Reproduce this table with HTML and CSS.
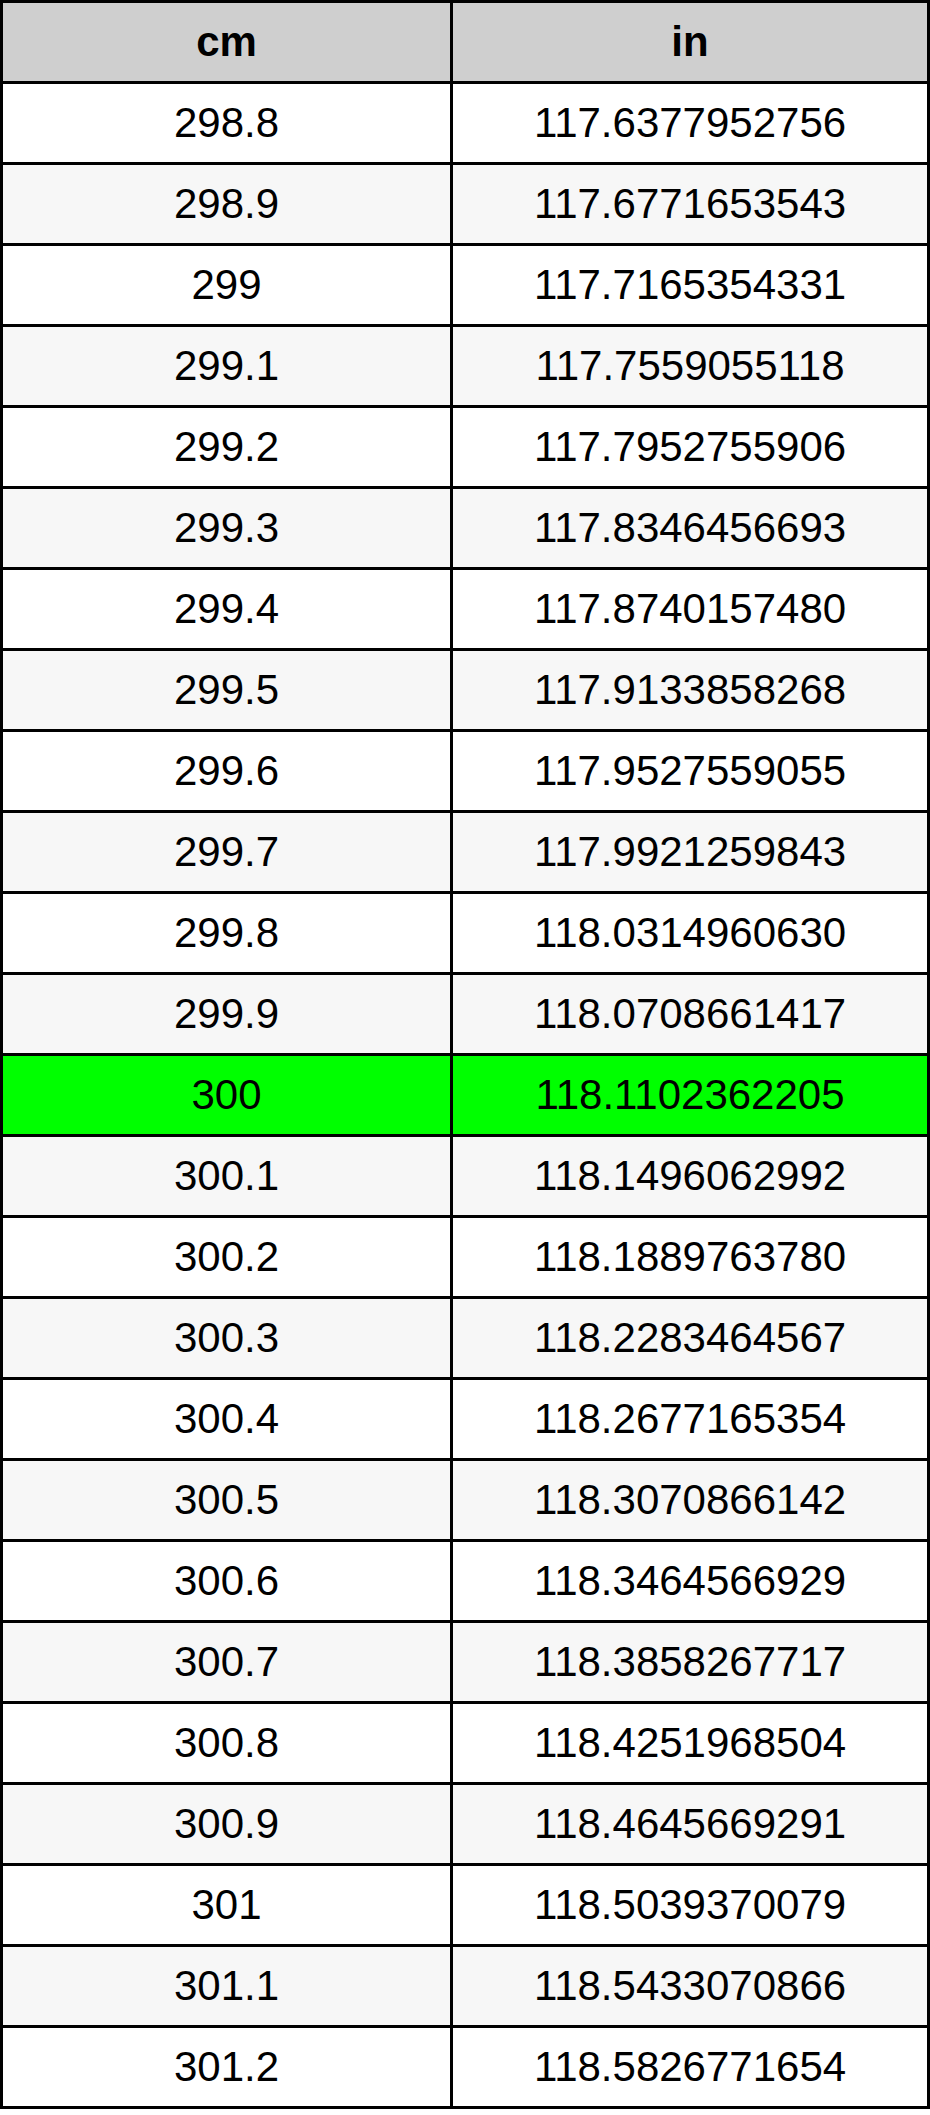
FILE: index.html
```html
<!DOCTYPE html>
<html>
<head>
<meta charset="utf-8">
<title>cm to in</title>
<link rel="stylesheet" href="styles.css">
</head>
<body>
<table class="conv">
<thead>
<tr><th class="c1">cm</th><th>in</th></tr>
</thead>
<tbody>
<tr><td>298.8</td><td>117.6377952756</td></tr>
<tr class="alt"><td>298.9</td><td>117.6771653543</td></tr>
<tr><td>299</td><td>117.7165354331</td></tr>
<tr class="alt"><td>299.1</td><td>117.7559055118</td></tr>
<tr><td>299.2</td><td>117.7952755906</td></tr>
<tr class="alt"><td>299.3</td><td>117.8346456693</td></tr>
<tr><td>299.4</td><td>117.8740157480</td></tr>
<tr class="alt"><td>299.5</td><td>117.9133858268</td></tr>
<tr><td>299.6</td><td>117.9527559055</td></tr>
<tr class="alt"><td>299.7</td><td>117.9921259843</td></tr>
<tr><td>299.8</td><td>118.0314960630</td></tr>
<tr class="alt"><td>299.9</td><td>118.0708661417</td></tr>
<tr class="hl"><td>300</td><td>118.1102362205</td></tr>
<tr class="alt"><td>300.1</td><td>118.1496062992</td></tr>
<tr><td>300.2</td><td>118.1889763780</td></tr>
<tr class="alt"><td>300.3</td><td>118.2283464567</td></tr>
<tr><td>300.4</td><td>118.2677165354</td></tr>
<tr class="alt"><td>300.5</td><td>118.3070866142</td></tr>
<tr><td>300.6</td><td>118.3464566929</td></tr>
<tr class="alt"><td>300.7</td><td>118.3858267717</td></tr>
<tr><td>300.8</td><td>118.4251968504</td></tr>
<tr class="alt"><td>300.9</td><td>118.4645669291</td></tr>
<tr><td>301</td><td>118.5039370079</td></tr>
<tr class="alt"><td>301.1</td><td>118.5433070866</td></tr>
<tr><td>301.2</td><td>118.5826771654</td></tr>
</tbody>
</table>
</body>
</html>
```

FILE: styles.css
```css
html, body {
  margin: 0;
  padding: 0;
  background: #ffffff;
}

.conv {
  width: 930px;
  box-sizing: border-box;
  border-collapse: separate;
  border-spacing: 0;
  border-top: 3px solid #000000;
  border-left: 3px solid #000000;
  table-layout: fixed;
  font-family: "Liberation Sans", Arial, sans-serif;
  font-size: 42px;
  color: #000000;
  margin: 0;
}

.conv th,
.conv td {
  box-sizing: border-box;
  border-right: 3px solid #000000;
  border-bottom: 3px solid #000000;
  padding: 0;
  height: 81px;
  line-height: 78px;
  text-align: center;
  white-space: nowrap;
}

.conv .c1 {
  width: 450px;
}

.conv th {
  background: #cfcfcf;
  font-weight: bold;
}

.conv td {
  background: #ffffff;
}

.conv tr.alt td {
  background: #f7f7f7;
}

.conv tr.hl td {
  background: #00ff00;
}
```
